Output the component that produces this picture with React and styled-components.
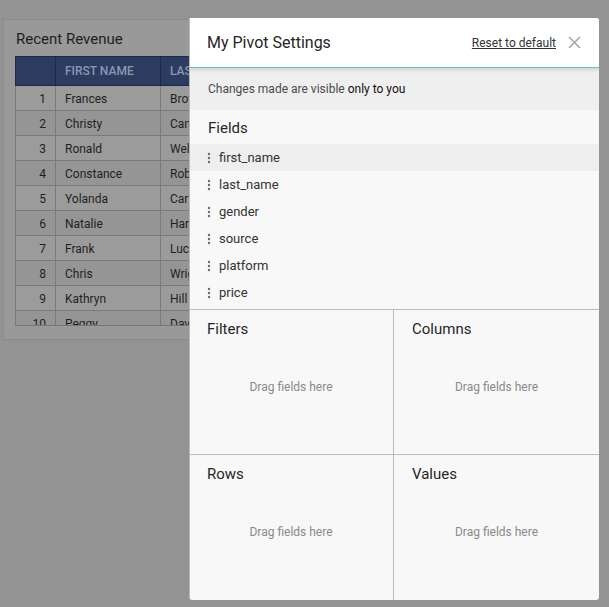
import React from "react";
import styled, { createGlobalStyle } from "styled-components";

const GlobalStyle = createGlobalStyle`
  html, body {
    margin: 0;
    padding: 0;
    background: #939393;
    font-family: Roboto, "Liberation Sans", sans-serif;
  }
  * { box-sizing: border-box; }
`;

const rows = [
  ["Frances", "Brown"],
  ["Christy", "Cannon"],
  ["Ronald", "Wells"],
  ["Constance", "Roberts"],
  ["Yolanda", "Carter"],
  ["Natalie", "Harris"],
  ["Frank", "Lucas"],
  ["Chris", "Wright"],
  ["Kathryn", "Hill"],
  ["Peggy", "Davis"],
];

const fields = ["first_name", "last_name", "gender", "source", "platform", "price"];
const zones = ["Filters", "Columns", "Rows", "Values"];

function Grip() {
  return (
    <svg width="4" height="12" viewBox="0 0 4 12">
      <circle cx="2" cy="2" r="1.2" fill="#6b6b6b" />
      <circle cx="2" cy="6" r="1.2" fill="#6b6b6b" />
      <circle cx="2" cy="10" r="1.2" fill="#6b6b6b" />
    </svg>
  );
}

function CloseIcon() {
  return (
    <svg width="13" height="13" viewBox="0 0 13 13">
      <path d="M1 1 L12 12 M12 1 L1 12" stroke="#a8a8a8" strokeWidth="1.6" />
    </svg>
  );
}

export default function App() {
  return (
    <>
      <GlobalStyle />
      <Page>
        <Card>
          <CardTitle>Recent Revenue</CardTitle>
          <TableClip>
            <Table>
              <thead>
                <tr>
                  <Th $w={40}></Th>
                  <Th $w={105}>FIRST NAME</Th>
                  <Th $w={140}>LAST NAME</Th>
                </tr>
              </thead>
              <tbody>
                {rows.map((r, i) => (
                  <Tr key={i} $odd={i % 2 === 1}>
                    <IdxCell>{i + 1}</IdxCell>
                    <Td>{r[0]}</Td>
                    <Td>{r[1]}</Td>
                  </Tr>
                ))}
              </tbody>
            </Table>
          </TableClip>
        </Card>

        <Panel>
          <Header>
            <Title>My Pivot Settings</Title>
            <HeaderActions>
              <ResetLink>Reset to default</ResetLink>
              <CloseButton>
                <CloseIcon />
              </CloseButton>
            </HeaderActions>
          </Header>
          <Notice>
            Changes made are visible <strong>only to you</strong>
          </Notice>
          <FieldsSection>
            <SectionTitle>Fields</SectionTitle>
            {fields.map((f, i) => (
              <FieldRow key={f} $active={i === 0}>
                <Grip />
                <span>{f}</span>
              </FieldRow>
            ))}
          </FieldsSection>
          <ZoneGrid>
            {zones.map((z) => (
              <Zone key={z}>
                <ZoneTitle>{z}</ZoneTitle>
                <ZoneHint>Drag fields here</ZoneHint>
              </Zone>
            ))}
          </ZoneGrid>
        </Panel>
      </Page>
    </>
  );
}

const Page = styled.div`
  position: relative;
  width: 609px;
  height: 607px;
  overflow: hidden;
  background: #939393;
  padding: 19px 0 0 3px;
`;

const Card = styled.div`
  width: 320px;
  height: 321px;
  background: #999999;
  border: 1px solid #8a8a8a;
  padding: 0 0 0 11px;
`;

const CardTitle = styled.div`
  height: 36px;
  display: flex;
  align-items: center;
  padding: 2px 0 0 1px;
  font-size: 15px;
  color: #1e1e1e;
`;

const TableClip = styled.div`
  height: 270px;
  overflow: hidden;
  border-bottom: 1px solid #757575;
`;

const Table = styled.table`
  border-collapse: collapse;
  font-size: 12px;
  color: #1f1f1f;
`;

const Th = styled.th`
  width: ${(p) => p.$w}px;
  height: 29px;
  background: #2b3c60;
  border: 1px solid #1b2a4a;
  color: #8a98b3;
  font-weight: 500;
  text-align: left;
  padding: 0 0 0 9px;
  font-size: 12px;
`;

const Tr = styled.tr`
  background: ${(p) => (p.$odd ? "#959595" : "#9b9b9b")};
`;

const Td = styled.td`
  height: 25px;
  border: 1px solid #7a7a7a;
  padding: 1px 0 0 9px;
  white-space: nowrap;
`;

const IdxCell = styled(Td)`
  text-align: right;
  padding: 1px 9px 0 0;
`;

const Panel = styled.div`
  position: absolute;
  left: 189px;
  top: 18px;
  width: 410px;
  height: 582px;
  background: #f8f8f8;
  border-left: 1px solid #b9b9b9;
  border-radius: 0 3px 3px 3px;
  display: flex;
  flex-direction: column;
  overflow: hidden;
`;

const Header = styled.div`
  height: 50px;
  flex-shrink: 0;
  background: #ffffff;
  border-bottom: 1px solid #5cc6b6;
  box-shadow: 0 2px 4px rgba(0, 0, 0, 0.12);
  display: flex;
  align-items: center;
  justify-content: space-between;
  padding: 0 18px 0 17px;
  position: relative;
  z-index: 1;
`;

const Title = styled.div`
  font-size: 16px;
  color: #262626;
`;

const HeaderActions = styled.div`
  display: flex;
  align-items: center;
  gap: 12px;
`;

const ResetLink = styled.a`
  font-size: 12px;
  color: #333333;
  text-decoration: underline;
  cursor: pointer;
`;

const CloseButton = styled.span`
  display: flex;
  align-items: center;
`;

const Notice = styled.div`
  height: 42px;
  flex-shrink: 0;
  background: #efefef;
  display: flex;
  align-items: center;
  padding: 0 0 0 18px;
  font-size: 12px;
  color: #4a4a4a;

  strong {
    font-weight: 400;
    color: #111111;
    margin-left: 3px;
  }
`;

const FieldsSection = styled.div`
  height: 200px;
  flex-shrink: 0;
  background: #f8f8f8;
  border-bottom: 1px solid #bdbdbd;
`;

const SectionTitle = styled.div`
  height: 34px;
  display: flex;
  align-items: center;
  padding: 2px 0 0 18px;
  font-size: 15px;
  color: #262626;
`;

const FieldRow = styled.div`
  height: 27px;
  display: flex;
  align-items: center;
  gap: 8px;
  padding: 0 0 0 17px;
  font-size: 13px;
  color: #333333;
  background: ${(p) => (p.$active ? "#eeeeee" : "transparent")};
`;

const ZoneGrid = styled.div`
  flex: 1;
  display: grid;
  grid-template-columns: 204px 1fr;
  grid-template-rows: 145px 1fr;
`;

const Zone = styled.div`
  display: flex;
  flex-direction: column;
  padding: 10px 18px 0 17px;

  &:nth-child(odd) {
    border-right: 1px solid #bdbdbd;
  }
  &:nth-child(-n + 2) {
    border-bottom: 1px solid #bdbdbd;
  }
  &:nth-child(even) {
    padding-left: 18px;
  }
`;

const ZoneTitle = styled.div`
  font-size: 15px;
  color: #262626;
  height: 18px;
  line-height: 18px;
`;

const ZoneHint = styled.div`
  margin-top: 42px;
  text-align: center;
  font-size: 12px;
  color: #8a8a8a;
`;
